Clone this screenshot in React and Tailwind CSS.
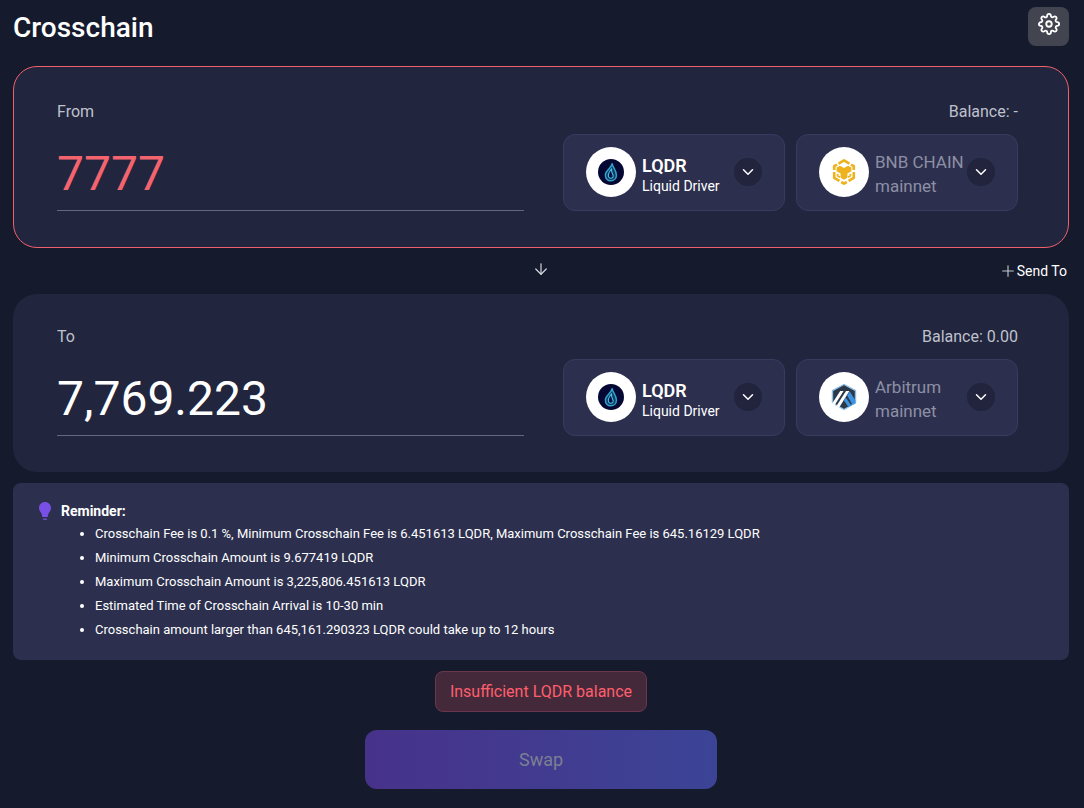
import { useState } from 'react'
import { ChevronDown, ArrowDown, Plus } from 'lucide-react'
import { FiSettings } from 'react-icons/fi'

const REMINDERS = [
  'Crosschain Fee is 0.1 %, Minimum Crosschain Fee is 6.451613 LQDR, Maximum Crosschain Fee is 645.16129 LQDR',
  'Minimum Crosschain Amount is 9.677419 LQDR',
  'Maximum Crosschain Amount is 3,225,806.451613 LQDR',
  'Estimated Time of Crosschain Arrival is 10-30 min',
  'Crosschain amount larger than 645,161.290323 LQDR could take up to 12 hours',
]

function LqdrLogo() {
  return (
    <svg width="26" height="26" viewBox="0 0 26 26" fill="none">
      <circle cx="13" cy="13" r="13" fill="#060834" />
      <path
        d="M14.2 4.8 C14.6 8.2 18.4 11.2 18.4 16.2 C18.4 19.6 15.8 21.8 12.8 21.8 C9.6 21.8 7.4 19.4 7.4 16 C7.4 11.6 13 9.6 14.2 4.8 Z"
        fill="#0d3a64"
        stroke="#2fa3c8"
        strokeWidth="1.5"
        strokeLinejoin="round"
      />
      <path
        d="M13.6 9.8 C11.2 12.8 9.4 14.6 10.6 18 C12.2 20 15 19.6 15.2 17.2 C15.2 14.8 12.8 13.6 13.6 9.8 Z"
        fill="#08104a"
        stroke="#4cc3e2"
        strokeWidth="1.1"
        strokeLinejoin="round"
      />
    </svg>
  )
}

function BnbLogo() {
  return (
    <svg width="24" height="28" viewBox="0 0 24 28" fill="none" stroke="#edb21c" strokeWidth="2.6" strokeLinejoin="round">
      <path d="M6.6 5.6 L12 2.4 L17.4 5.6" />
      <path d="M5 6.6 L2.2 8.2 V12" />
      <path d="M19 6.6 L21.8 8.2 V12" />
      <path d="M2.2 14 V19.8 L7.4 22.8" />
      <path d="M21.8 14 V19.8 L16.6 22.8" />
      <path d="M9.2 24 L12 25.6 L14.8 24" />
      <path d="M5.6 15.8 V17.8 L8 19.2" strokeWidth="1.8" />
      <path d="M18.4 15.8 V17.8 L16 19.2" strokeWidth="1.8" />
      <path
        d="M8 7.8 L12 10 L16 7.8 L19.4 9.6 V13.2 L15.4 15.6 V19.8 L12 21.8 L8.6 19.8 V15.6 L4.6 13.2 V9.6 Z"
        fill="#edb21c"
        stroke="none"
      />
    </svg>
  )
}

function ArbitrumLogo() {
  return (
    <svg width="26" height="28" viewBox="0 0 26 28" fill="none">
      <path d="M13 1.5 L24.5 7.6 V20 L13 26.5 L1.5 20 V7.6 Z" fill="#2a3848" stroke="#8fbfe4" strokeWidth="1.4" strokeLinejoin="round" />
      <path d="M16.2 12.5 L18.8 8.4 L24.4 17.6 V20 L21.4 21.8 Z" fill="#3c93e0" />
      <path d="M14.8 14.6 L20.4 22.4 L17.4 24 L13 17.6 Z" fill="#3c93e0" />
      <path d="M0.8 21 L9.2 8 H12.6 L3.6 22.2 L1.2 21 Z" fill="#ffffff" />
      <path d="M5.4 23 L15 8 H18.4 L8.2 24.4 Z" fill="#ffffff" />
    </svg>
  )
}

function BulbIcon() {
  return (
    <svg width="12" height="18" viewBox="0 0 12 18" fill="#7950e6" className="shrink-0">
      <path d="M6 0 C2.7 0 0 2.6 0 5.9 C0 7.8 0.9 9.1 1.9 10.4 C2.7 11.5 3.1 12.9 3.3 15 H8.7 C8.9 12.9 9.3 11.5 10.1 10.4 C11.1 9.1 12 7.8 12 5.9 C12 2.6 9.3 0 6 0 Z" />
      <rect x="4" y="16.6" width="4" height="1.2" rx="0.6" />
    </svg>
  )
}

function PickerButton({ logo, label, children }) {
  return (
    <button
      type="button"
      aria-haspopup="listbox"
      aria-label={label}
      className="flex h-[77px] w-[222px] items-center rounded-xl border border-[#373b5e] bg-[#2c2f4e] px-[22px] pb-0.5 text-left"
    >
      <span className="flex size-[50px] shrink-0 items-center justify-center rounded-full bg-white">{logo}</span>
      <span className="ml-1.5 flex min-w-0 flex-1 flex-col whitespace-nowrap">{children}</span>
      <span className="flex size-7 shrink-0 items-center justify-center rounded-full bg-[#21243c]">
        <ChevronDown size={18} className="text-white" />
      </span>
    </button>
  )
}

function TokenPicker() {
  return (
    <PickerButton label="LQDR Liquid Driver" logo={<LqdrLogo />}>
      <span className="pt-2 text-lg font-semibold leading-5 text-white">LQDR</span>
      <span className="text-sm leading-5 text-white">Liquid Driver</span>
    </PickerButton>
  )
}

function ChainPicker({ name, logo }) {
  return (
    <PickerButton label={`${name} mainnet`} logo={logo}>
      <span className="pt-1 text-[17px] leading-6 text-[#8d90a5]">{name}</span>
      <span className="text-[17px] leading-6 text-[#8d90a5]">mainnet</span>
    </PickerButton>
  )
}

function AmountCard({ id, title, balance, error, value, onChange, chain, logo }) {
  return (
    <section
      className={
        error
          ? 'rounded-3xl border border-[#f0616d] bg-[#21253e] pt-[33px] pr-[50px] pb-9 pl-[43px]'
          : 'rounded-3xl bg-[#21253e] pt-[31px] pr-[51px] pb-9 pl-11'
      }
    >
      <div className="flex items-center justify-between text-base text-[#bfc1cc]">
        <label htmlFor={id}>{title}</label>
        <span>Balance: {balance}</span>
      </div>
      <div className="mt-2.5 flex gap-[39px]">
        <input
          id={id}
          type="text"
          value={value}
          readOnly={!onChange}
          onChange={onChange}
          className={
            error
              ? 'min-w-0 flex-1 border-b border-[#64677d] bg-transparent pt-0.5 text-5xl text-[#f4646f] outline-none'
              : 'min-w-0 flex-1 border-b border-[#64677d] bg-transparent pt-0.5 text-5xl text-white outline-none'
          }
        />
        <div className="flex shrink-0 gap-[11px]">
          <TokenPicker />
          <ChainPicker name={chain} logo={logo} />
        </div>
      </div>
    </section>
  )
}

export default function App() {
  const [amount, setAmount] = useState('7777')

  return (
    <main className="min-h-screen bg-[#151a2d] pr-[15px] pb-5 pl-[13px] font-['Roboto',sans-serif]">
      <header className="flex h-[66px] items-start justify-between pt-[7px]">
        <h1 className="text-[28px] font-medium leading-[42px] text-white">Crosschain</h1>
        <button
          type="button"
          aria-label="Settings"
          className="flex h-[39px] w-[41px] items-start justify-center rounded-lg bg-[#42454f] pt-1.5 text-white"
        >
          <FiSettings size={22} />
        </button>
      </header>

      <AmountCard
        id="from-amount"
        title="From"
        balance="-"
        error
        value={amount}
        onChange={(e) => setAmount(e.target.value)}
        chain="BNB CHAIN"
        logo={<BnbLogo />}
      />

      <div className="grid h-[46px] grid-cols-3 items-center">
        <button type="button" aria-label="Switch direction" className="col-start-2 justify-self-center pb-1 text-[#d5d6dd]">
          <ArrowDown size={18} strokeWidth={1.6} />
        </button>
        <button type="button" className="flex items-center justify-self-end pr-0.5 text-sm text-white">
          <Plus size={18} strokeWidth={1.5} className="text-[#c5c7d0]" />
          Send To
        </button>
      </div>

      <AmountCard id="to-amount" title="To" balance="0.00" value="7,769.223" chain="Arbitrum" logo={<ArbitrumLogo />} />

      <section className="mt-[11px] rounded-lg bg-[#2c304e] pt-[17px] pr-6 pb-[18px] pl-[26px] text-[13px] leading-6 text-white">
        <div className="flex h-[22px] items-center gap-2.5">
          <BulbIcon />
          <h2 className="text-sm font-bold">Reminder:</h2>
        </div>
        <ul className="list-disc pl-14">
          {REMINDERS.map((text) => (
            <li key={text}>{text}</li>
          ))}
        </ul>
      </section>

      <div className="mt-[11px] flex flex-col items-center gap-[18px]">
        <p className="flex h-[41px] items-center rounded-lg border border-[#69364c] bg-[#44293b] px-3.5 text-base text-[#ff5f6b]">
          Insufficient LQDR balance
        </p>
        <button
          type="button"
          disabled
          className="h-[59px] w-[352px] rounded-xl bg-linear-to-r from-[#47328a] to-[#3b4496] text-lg text-[#7d7f93]"
        >
          Swap
        </button>
      </div>
    </main>
  )
}
